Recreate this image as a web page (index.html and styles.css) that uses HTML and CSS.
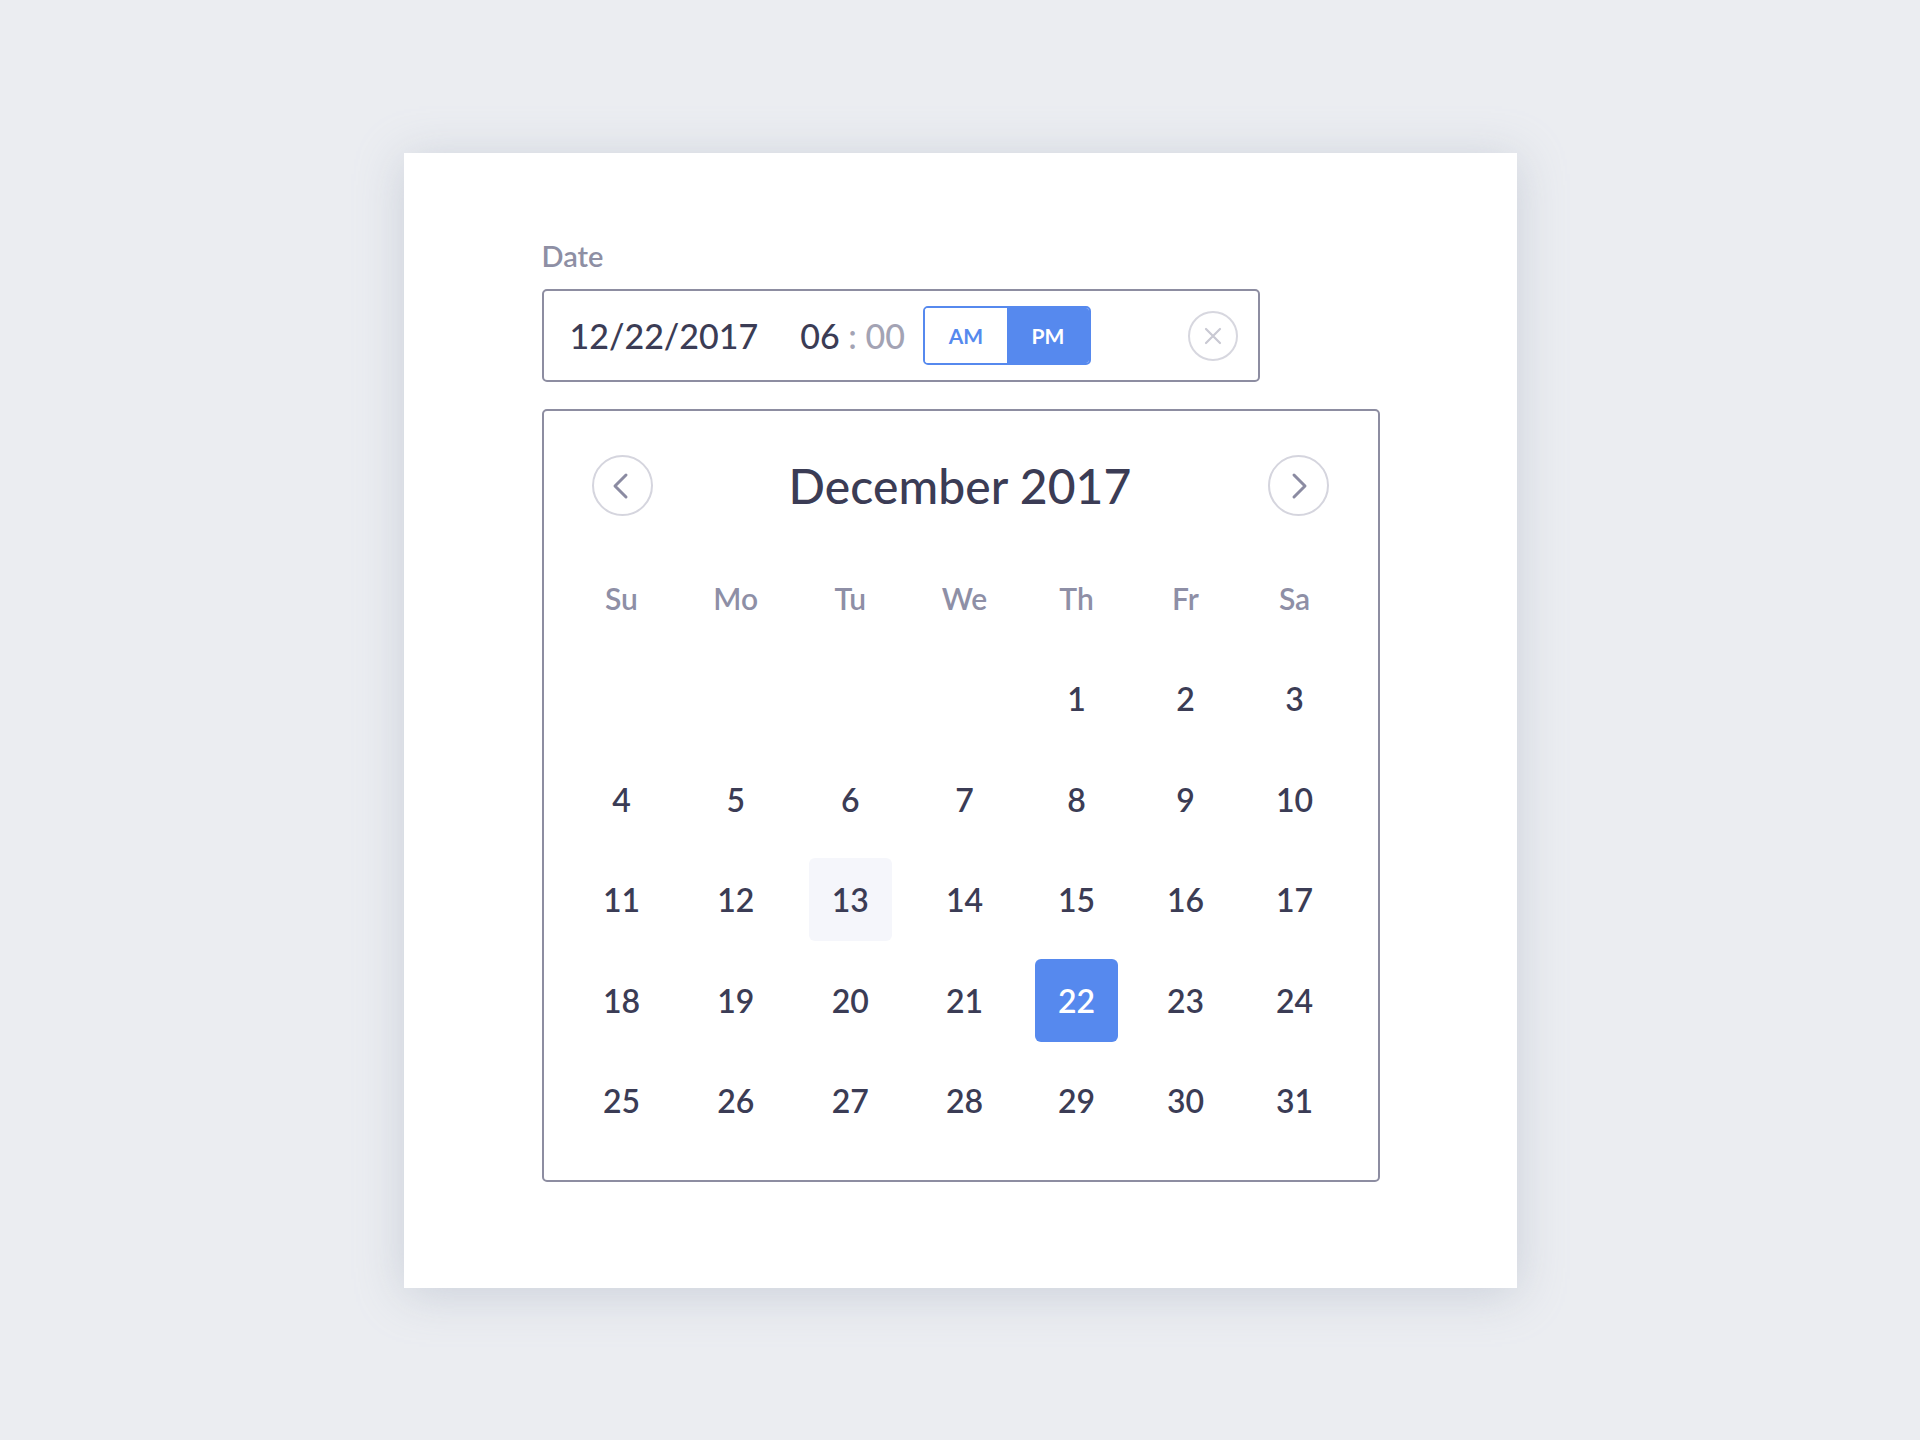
FILE: index.html
```html
<!DOCTYPE html>
<html lang="en">
<head>
<meta charset="utf-8">
<title>Date picker</title>
<link rel="stylesheet" href="styles.css">
</head>
<body>
<main class="card">
  <label class="field-label">Date</label>
  <div class="input">
    <span class="date-value">12/22/2017</span>
    <span class="time-value"><span class="hh">06</span><span class="sep"> : </span><span class="mm">00</span></span>
    <div class="ampm">
      <button class="am">AM</button>
      <button class="pm">PM</button>
    </div>
    <button class="clear" aria-label="Clear">
      <svg viewBox="0 0 20 20" width="20" height="20"><path d="M3 3 L17 17 M17 3 L3 17" stroke="#c9c9d3" stroke-width="2.2" stroke-linecap="round" fill="none"/></svg>
    </button>
  </div>

  <section class="calendar">
    <header class="cal-head">
      <button class="nav" aria-label="Previous month">
        <svg viewBox="0 0 30 30" width="30" height="30"><path d="M19 4 L8 15 L19 26" stroke="#8b8ba2" stroke-width="3" stroke-linecap="round" stroke-linejoin="round" fill="none"/></svg>
      </button>
      <h2 class="month">December 2017</h2>
      <button class="nav" aria-label="Next month">
        <svg viewBox="0 0 30 30" width="30" height="30"><path d="M11 4 L22 15 L11 26" stroke="#8b8ba2" stroke-width="3" stroke-linecap="round" stroke-linejoin="round" fill="none"/></svg>
      </button>
    </header>
    <div class="grid">
      <div class="wd">Su</div><div class="wd">Mo</div><div class="wd">Tu</div><div class="wd">We</div><div class="wd">Th</div><div class="wd">Fr</div><div class="wd">Sa</div>
      <div class="day"></div><div class="day"></div><div class="day"></div><div class="day"></div>
      <div class="day"><span>1</span></div><div class="day"><span>2</span></div><div class="day"><span>3</span></div>
      <div class="day"><span>4</span></div><div class="day"><span>5</span></div><div class="day"><span>6</span></div><div class="day"><span>7</span></div><div class="day"><span>8</span></div><div class="day"><span>9</span></div><div class="day"><span>10</span></div>
      <div class="day"><span>11</span></div><div class="day"><span>12</span></div><div class="day"><span class="hover">13</span></div><div class="day"><span>14</span></div><div class="day"><span>15</span></div><div class="day"><span>16</span></div><div class="day"><span>17</span></div>
      <div class="day"><span>18</span></div><div class="day"><span>19</span></div><div class="day"><span>20</span></div><div class="day"><span>21</span></div><div class="day"><span class="selected">22</span></div><div class="day"><span>23</span></div><div class="day"><span>24</span></div>
      <div class="day"><span>25</span></div><div class="day"><span>26</span></div><div class="day"><span>27</span></div><div class="day"><span>28</span></div><div class="day"><span>29</span></div><div class="day"><span>30</span></div><div class="day"><span>31</span></div>
    </div>
  </section>
</main>
</body>
</html>
```

FILE: styles.css
```css
* { box-sizing: border-box; }

html, body {
  margin: 0;
  padding: 0;
}

body {
  background: #ebedf1;
  font-family: Lato, "Noto Sans", "Liberation Sans", sans-serif;
  color: #3b3c55;
  padding-top: 153px;
  min-height: 1440px;
}

.card {
  width: 1113px;
  height: 1135px;
  margin: 0 auto;
  background: #ffffff;
  box-shadow: 0 6px 44px rgba(165, 172, 190, 0.45);
  padding: 85px 0 0 138px;
  display: flex;
  flex-direction: column;
  align-items: flex-start;
}

.field-label {
  display: block;
  font-size: 29px;
  line-height: 36px;
  font-weight: 600;
  color: #8e8fa4;
  margin-bottom: 15px;
}

.input {
  width: 718px;
  height: 93px;
  border: 2px solid #8d8da1;
  border-radius: 5px;
  display: flex;
  align-items: center;
  padding: 0 20px 0 26px;
}

.date-value {
  font-size: 34px;
  font-weight: 500;
  color: #3b3c55;
}

.time-value {
  font-size: 34px;
  font-weight: 500;
  margin-left: 42px;
  white-space: pre;
}

.time-value .sep,
.time-value .mm {
  color: #a3a3b4;
}

.ampm {
  display: flex;
  margin-left: 18px;
  height: 59px;
  border: 2px solid #5689ee;
  border-radius: 5px;
  overflow: hidden;
}

.ampm button {
  width: 82px;
  border: 0;
  margin: 0;
  font-family: inherit;
  font-size: 21px;
  font-weight: 700;
  cursor: pointer;
}

.ampm .am {
  background: #ffffff;
  color: #5689ee;
}

.ampm .pm {
  background: #5689ee;
  color: #ffffff;
}

.clear {
  margin-left: auto;
  width: 50px;
  height: 50px;
  border-radius: 50%;
  border: 2px solid #d7d7df;
  background: #ffffff;
  display: flex;
  align-items: center;
  justify-content: center;
  padding: 0;
}

.calendar {
  margin-top: 27px;
  width: 838px;
  height: 773px;
  border: 2px solid #8d8da1;
  border-radius: 5px;
  padding: 44px 0 0 21px;
}

.cal-head {
  width: 789px;
  height: 61px;
  display: flex;
  align-items: center;
  justify-content: space-between;
  padding: 0 25px 0 27px;
}

.nav {
  width: 61px;
  height: 61px;
  border-radius: 50%;
  border: 2px solid #d5d5de;
  background: #ffffff;
  display: flex;
  align-items: center;
  justify-content: center;
  padding: 0;
}

.month {
  margin: 0;
  font-size: 48px;
  font-weight: 500;
  color: #3b3c55;
  letter-spacing: 0.1px;
}

.grid {
  margin-top: 32px;
  display: grid;
  grid-template-columns: 114px 114.5px 114.5px 114px 110px 108px 110px;
  grid-auto-rows: 100.5px;
}

.wd {
  display: flex;
  align-items: center;
  justify-content: center;
  font-size: 30px;
  font-weight: 600;
  color: #8e8fa6;
}

.day {
  display: flex;
  align-items: center;
  justify-content: center;
}

.day span {
  width: 83px;
  height: 83px;
  border-radius: 6px;
  display: flex;
  align-items: center;
  justify-content: center;
  font-size: 32px;
  font-weight: 600;
  color: #3b3c55;
}

.day span.hover {
  background: #f5f6fb;
}

.day span.selected {
  background: #5689ee;
  color: #ffffff;
}
```
